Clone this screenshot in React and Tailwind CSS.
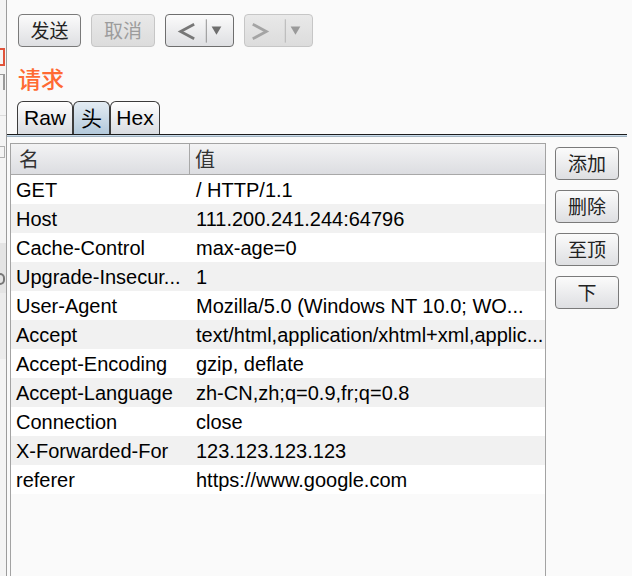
import React from "react";

const rows = [
  ["GET", "/ HTTP/1.1"],
  ["Host", "111.200.241.244:64796"],
  ["Cache-Control", "max-age=0"],
  ["Upgrade-Insecur...", "1"],
  ["User-Agent", "Mozilla/5.0 (Windows NT 10.0; WO..."],
  ["Accept", "text/html,application/xhtml+xml,applic..."],
  ["Accept-Encoding", "gzip, deflate"],
  ["Accept-Language", "zh-CN,zh;q=0.9,fr;q=0.8"],
  ["Connection", "close"],
  ["X-Forwarded-For", "123.123.123.123"],
  ["referer", "https://www.google.com"],
];

const latin = { fontFamily: '"Liberation Sans", Arial, sans-serif' };
const cjk = { fontFamily: '"Noto Sans CJK SC", "Noto Sans", sans-serif' };

function Btn({ children, disabled, className = "" }) {
  return (
    <div
      className={
        "h-[33px] flex items-center justify-center rounded-[4px] border text-[19px] " +
        (disabled
          ? "border-[#c6c6c6] bg-gradient-to-b from-[#e9e9e9] to-[#dcdcdc] text-[#9c9c9c] "
          : "border-[#7a7a7a] bg-gradient-to-b from-[#fbfbfb] to-[#dedfe2] text-[#222] ") +
        className
      }
      style={cjk}
    >
      {children}
    </div>
  );
}

function NavBtn({ dir, disabled }) {
  const c = disabled ? "#a4a4a4" : "#777777";
  return (
    <div
      className={
        "w-[69px] h-[33px] rounded-[4px] border flex items-center " +
        (disabled
          ? "border-[#c6c6c6] bg-gradient-to-b from-[#e9e9e9] to-[#dcdcdc]"
          : "border-[#6e6e6e] bg-gradient-to-b from-[#fbfbfb] to-[#dedfe2]")
      }
    >
      <svg width="69" height="33" viewBox="0 0 69 33">
        {dir === "left" ? (
          <polyline points="29,10 15,17.5 29,25" fill="none" stroke={c} strokeWidth="2.8" />
        ) : (
          <polyline points="8,10 22,17.5 8,25" fill="none" stroke={c} strokeWidth="2.8" />
        )}
        <line x1="41.5" y1="5" x2="41.5" y2="29" stroke={disabled ? "#b4b4b4" : "#8e8e8e"} strokeWidth="1" />
        <polygon points="47,12.5 57,12.5 52,21" fill={disabled ? "#9a9a9a" : "#6e6e6e"} />
      </svg>
    </div>
  );
}

function Tab({ children, selected, w, font }) {
  return (
    <div
      className={
        "h-[33px] flex items-center justify-center rounded-t-[6px] border border-b-0 border-[#3c3c3c] text-[21px] text-black " +
        (selected
          ? "bg-gradient-to-b from-[#e3ecf3] to-[#b3c9db]"
          : "bg-gradient-to-b from-[#ffffff] to-[#d9dce1]")
      }
      style={{ width: w, ...font }}
    >
      {children}
    </div>
  );
}

export default function App() {
  return (
    <div className="w-[632px] h-[576px] flex overflow-hidden bg-[#fafafa]">
      {/* left partially visible strip */}
      <div className="w-[7px] shrink-0 flex flex-col bg-[#f4f4f4] overflow-hidden border-r border-[#9c9c9c]">
        <div className="h-[48px]" />
        <div className="h-[18px] w-[5px] border-2 border-[#e0533a] border-l-0" />
        <div className="h-[8px]" />
        <div className="h-[16px] w-[5px] border-r-2 border-t border-[#9a9a9a]" />
        <div className="h-[26px] border-b border-[#dcdcdc]" />
        <div className="h-[30px]" />
        <div className="h-[12px] w-[5px] border-r border-y border-[#b0b0b0]" />
        <div className="h-[85px]" />
        <div className="h-[22px] bg-[#e4e4e4]" />
        <div className="h-[28px] bg-[#e4e4e4] flex items-center">
          <div className="w-[5px] h-[12px] rounded-r-full border-2 border-l-0 border-[#777]" />
        </div>
        <div className="h-[66px] bg-[#ececec]" />
        <div className="flex-1" />
      </div>

      {/* main panel */}
      <div className="flex-1 flex flex-col">
        <div className="pt-[14px] pl-[11px] flex gap-[10px]">
          <Btn className="w-[63px]">发送</Btn>
          <Btn className="w-[64px]" disabled>取消</Btn>
          <NavBtn dir="left" />
          <NavBtn dir="right" disabled />
        </div>

        <div className="h-[54px] pl-[11px] pt-[8px] flex items-center">
          <span className="text-[23px] text-[#ff6a33] font-medium" style={cjk}>请求</span>
        </div>

        <div className="pl-[10px] flex">
          <Tab w={56} font={latin}>Raw</Tab>
          <Tab w={37} font={cjk} selected>头</Tab>
          <Tab w={50} font={latin}>Hex</Tab>
        </div>
        <div className="w-[620px] border-t border-[#1c1c1c] h-[3px] bg-[#c8dae9] border-b border-b-[#9fb2c1]" />

        <div className="flex mt-[6px] pl-[3px] flex-1 min-h-0">
          <div className="w-[536px] border border-b-0 border-[#a3a3a3] flex flex-col bg-[#fafafa]" style={latin}>
            <div className="h-[31px] flex border-b border-[#a8a8a8] bg-gradient-to-b from-[#f3f3f4] to-[#dcdde1] text-[20px] text-[#333]" style={cjk}>
              <div className="w-[179px] border-r border-[#a8a8a8] pl-[8px] flex items-center">名</div>
              <div className="flex-1 pl-[5px] flex items-center">值</div>
            </div>
            {rows.map(([k, v], i) => (
              <div
                key={k}
                className={"h-[29px] flex items-center text-[20px] text-black " + (i % 2 === 1 ? "bg-[#f1f1f1]" : "bg-white")}
              >
                <div className="w-[179px] pl-[5px] whitespace-nowrap overflow-hidden">{k}</div>
                <div className="flex-1 pl-[6px] whitespace-nowrap overflow-hidden">{v}</div>
              </div>
            ))}
          </div>

          <div className="ml-[9px] pt-[4px] flex flex-col gap-[10px]">
            <Btn className="w-[64px]">添加</Btn>
            <Btn className="w-[64px]">删除</Btn>
            <Btn className="w-[64px]">至顶</Btn>
            <Btn className="w-[64px]">下</Btn>
          </div>
        </div>
      </div>
    </div>
  );
}
